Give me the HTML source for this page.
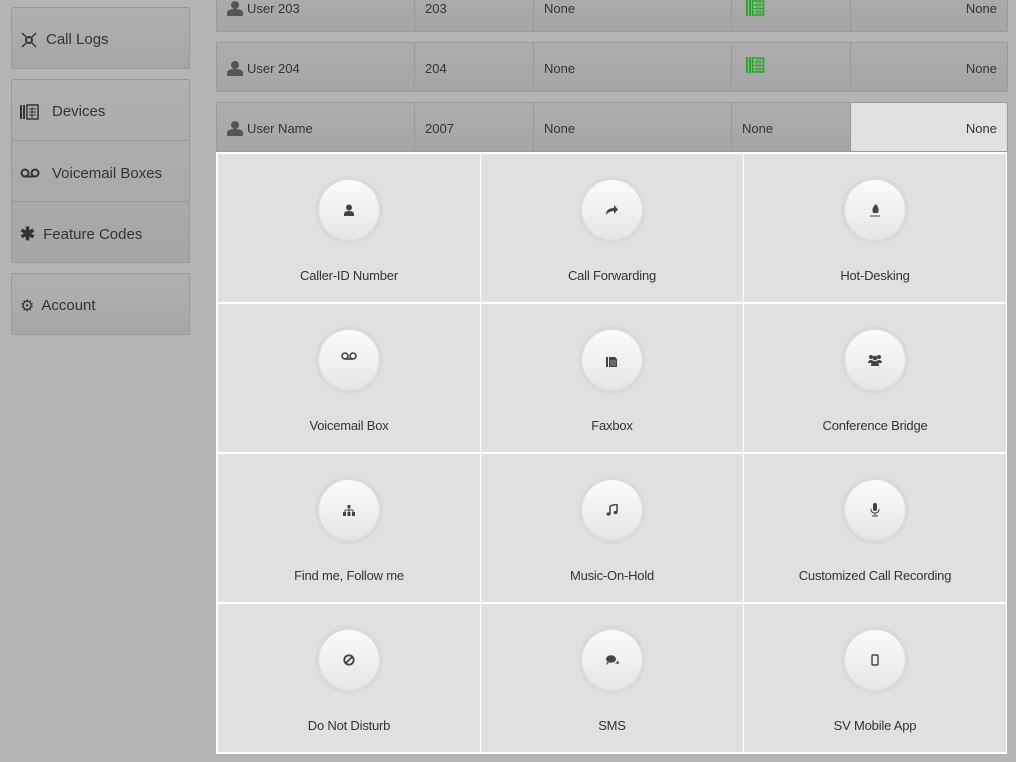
<!DOCTYPE html>
<html><head><meta charset="utf-8"><style>
*{box-sizing:border-box;margin:0;padding:0}
body{width:1016px;height:762px;background:#b4b4b4;font-family:"Liberation Sans",sans-serif;color:#333;position:relative;overflow:hidden}
.sb{position:absolute;left:11px;width:179px;border:1px solid #999;border-radius:2px;background:linear-gradient(#b0b0b0,#a6a6a6)}
.sbi{position:absolute;left:11px;width:179px;height:61px;font-size:15px;color:#333;display:flex;align-items:center;padding-left:9px;padding-top:4px;border-top:1px solid #999}
.sbi svg{margin-right:8px}
.row{position:absolute;left:216px;width:792px;height:50px;border:1px solid #999;border-radius:2px;background:linear-gradient(#adadad,#a5a5a5);font-size:13px}
.c{position:absolute;top:0;height:100%;border-left:1px solid #999;display:flex;align-items:center;padding-left:10px;padding-top:2px}
.grid{position:absolute;left:216px;top:152px;width:792px;height:602px;background:#fff}
.t{position:absolute;width:262px;height:148px;background:#e0e0e0}
.t .h{position:absolute;left:97px;top:22px;width:68px;height:68px;border-radius:50%;background:#dadada}
.t .b{position:absolute;left:101px;top:26px;width:60px;height:60px;border-radius:50%;background:linear-gradient(#fbfbfb,#e5e5e5);display:flex;align-items:center;justify-content:center}
.t .l{position:absolute;left:0;right:0;top:114px;text-align:center;font-size:13px;color:#333;letter-spacing:-0.2px}
</style></head><body>
<div class="sb" style="top:7px;height:62px"></div>
<div class="sbi" style="top:7px;border:none"><svg width="18" height="16" viewBox="0 0 18 16"><circle cx="9" cy="8" r="3" fill="none" stroke="#333" stroke-width="2"/><g stroke="#333" stroke-width="1.5"><line x1="2" y1="1" x2="6" y2="5"/><line x1="16" y1="1" x2="12" y2="5"/><line x1="2" y1="15" x2="6" y2="11"/><line x1="16" y1="15" x2="12" y2="11"/></g></svg>Call Logs</div>
<div class="sb" style="top:79px;height:184px"></div>
<div class="sbi" style="top:79px;border:none"><svg width="20" height="16" viewBox="0 0 20 16"><rect x="0" y="1" width="2" height="14" fill="#333"/><rect x="3" y="1" width="2" height="14" fill="#333"/><rect x="7" y="1" width="11" height="14" fill="none" stroke="#333" stroke-width="1.5"/><path d="M9 5h7M9 8h7M9 11h7M12 3v11" stroke="#333"/></svg><span style="margin-left:4px">Devices</span></div>
<div class="sbi" style="top:140px"><svg width="20" height="10" viewBox="0 0 20 10"><circle cx="5" cy="5" r="3.5" fill="none" stroke="#333" stroke-width="2"/><circle cx="15" cy="5" r="3.5" fill="none" stroke="#333" stroke-width="2"/><line x1="5" y1="8.5" x2="15" y2="8.5" stroke="#333" stroke-width="2"/></svg><span style="margin-left:4px">Voicemail Boxes</span></div>
<div class="sbi" style="top:201px"><span style="font-size:18px;font-weight:bold;margin-right:8px">✱</span>Feature Codes</div>
<div class="sb" style="top:273px;height:62px"></div>
<div class="sbi" style="top:273px;border:none"><span style="font-size:16px;margin-right:7px">⚙</span>Account</div>

<div class="row" style="top:-18px"><div class="c" style="left:0;border:none;padding-left:10px"><svg width="16" height="15" viewBox="0 0 16 15"><circle cx="8" cy="4" r="4" fill="#555"/><path d="M0 15v-3q0-4 8-4t8 4v3z" fill="#555"/></svg><span style="margin-left:4px">User 203</span></div><div class="c" style="left:197px;width:119px">203</div><div class="c" style="left:316px;width:198px">None</div><div class="c" style="left:514px;width:119px;padding-left:14px"><svg width="19" height="16"><rect x="0" y="0" width="2" height="16" fill="#2a2"/><rect x="3" y="0" width="2" height="16" fill="#2a2"/><rect x="6.5" y="1" width="11" height="14" fill="none" stroke="#2a2" stroke-width="1.5"/><path d="M7 5h10M7 8.5h10M7 12h10M11 1v14M14 1v14" stroke="#2a2"/></svg></div><div class="c" style="left:633px;width:157px;justify-content:flex-end;padding-right:10px">None</div></div>
<div class="row" style="top:42px"><div class="c" style="left:0;border:none;padding-left:10px"><svg width="16" height="15" viewBox="0 0 16 15"><circle cx="8" cy="4" r="4" fill="#555"/><path d="M0 15v-3q0-4 8-4t8 4v3z" fill="#555"/></svg><span style="margin-left:4px">User 204</span></div><div class="c" style="left:197px;width:119px">204</div><div class="c" style="left:316px;width:198px">None</div><div class="c" style="left:514px;width:119px;padding-left:14px;padding-bottom:6px"><svg width="19" height="16"><rect x="0" y="0" width="2" height="16" fill="#2a2"/><rect x="3" y="0" width="2" height="16" fill="#2a2"/><rect x="6.5" y="1" width="11" height="14" fill="none" stroke="#2a2" stroke-width="1.5"/><path d="M7 5h10M7 8.5h10M7 12h10M11 1v14M14 1v14" stroke="#2a2"/></svg></div><div class="c" style="left:633px;width:157px;justify-content:flex-end;padding-right:10px">None</div></div>
<div class="row" style="top:102px"><div class="c" style="left:0;border:none;padding-left:10px"><svg width="16" height="15" viewBox="0 0 16 15"><circle cx="8" cy="4" r="4" fill="#555"/><path d="M0 15v-3q0-4 8-4t8 4v3z" fill="#555"/></svg><span style="margin-left:4px">User Name</span></div><div class="c" style="left:197px;width:119px">2007</div><div class="c" style="left:316px;width:198px">None</div><div class="c" style="left:514px;width:119px">None</div><div class="c" style="left:633px;width:157px;justify-content:flex-end;padding-right:10px;background:#e0e0e0">None</div></div>

<div class="grid" style="width:791px">
<div class="t" style="left:2px;top:2px"><div class="h"></div><div class="b"><svg width="12" height="12"><circle cx="6" cy="3.5" r="3" fill="#444"/><path d="M1 12v-2q0-3 5-3t5 3v2z" fill="#444"/></svg></div><div class="l">Caller-ID Number</div></div>
<div class="t" style="left:265px;top:2px"><div class="h"></div><div class="b"><svg width="14" height="12"><path d="M1 11q0-7 8-7v-3l4 4.5-4 4.5v-3q-5 0-8 4z" fill="#444"/></svg></div><div class="l">Call Forwarding</div></div>
<div class="t" style="left:528px;top:2px"><div class="h"></div><div class="b"><svg width="12" height="14"><path d="M7 1q-5 4-3 9h5q2-4-2-9z" fill="#444"/><line x1="1" y1="13" x2="11" y2="13" stroke="#444"/></svg></div><div class="l">Hot-Desking</div></div>
<div class="t" style="left:2px;top:152px"><div class="h"></div><div class="b" style="padding-bottom:8px"><svg width="16" height="8"><circle cx="4" cy="4" r="3" fill="none" stroke="#444" stroke-width="1.6"/><circle cx="12" cy="4" r="3" fill="none" stroke="#444" stroke-width="1.6"/><line x1="4" y1="7" x2="12" y2="7" stroke="#444" stroke-width="1.6"/></svg></div><div class="l">Voicemail Box</div></div>
<div class="t" style="left:265px;top:152px"><div class="h"></div><div class="b"><svg width="12" height="13"><rect x="0" y="3" width="2" height="10" fill="#444"/><path d="M3 3h6l2 2v8h-8z" fill="#444"/><path d="M4 7h6M4 9h6M4 11h6" stroke="#ddd" stroke-width=".6"/></svg></div><div class="l">Faxbox</div></div>
<div class="t" style="left:528px;top:152px"><div class="h"></div><div class="b"><svg width="14" height="12"><circle cx="3" cy="3" r="2" fill="#444"/><circle cx="11" cy="3" r="2" fill="#444"/><circle cx="7" cy="4" r="2.3" fill="#444"/><path d="M0 9q0-3 3-3t3 3zM8 9q0-3 3-3t3 3zM3 12q0-5 4-5t4 5z" fill="#444"/></svg></div><div class="l">Conference Bridge</div></div>
<div class="t" style="left:2px;top:302px"><div class="h"></div><div class="b"><svg width="12" height="11"><rect x="4.5" y="0" width="3" height="3" fill="#444"/><path d="M6 3v2M2 5h8M2 5v2M10 5v2M6 5v2" stroke="#444"/><rect x="0" y="7" width="3" height="4" fill="#444"/><rect x="4.5" y="7" width="3" height="4" fill="#444"/><rect x="9" y="7" width="3" height="4" fill="#444"/></svg></div><div class="l">Find me, Follow me</div></div>
<div class="t" style="left:265px;top:302px"><div class="h"></div><div class="b"><svg width="12" height="12"><path d="M4 2l7-2v8" stroke="#444" stroke-width="1.5" fill="none"/><path d="M4 2v8" stroke="#444" stroke-width="1.5"/><ellipse cx="2.5" cy="10" rx="2" ry="1.6" fill="#444"/><ellipse cx="9.5" cy="8.5" rx="2" ry="1.6" fill="#444"/></svg></div><div class="l">Music-On-Hold</div></div>
<div class="t" style="left:528px;top:302px"><div class="h"></div><div class="b"><svg width="10" height="14"><rect x="3" y="0" width="4" height="8" rx="2" fill="#444"/><path d="M1 6q0 4 4 4t4-4M5 10v3M2 13h6" stroke="#444" fill="none"/></svg></div><div class="l">Customized Call Recording</div></div>
<div class="t" style="left:2px;top:452px"><div class="h"></div><div class="b"><svg width="12" height="12"><circle cx="6" cy="6" r="4.7" fill="none" stroke="#444" stroke-width="1.8"/><line x1="3" y1="9" x2="9" y2="3" stroke="#444" stroke-width="1.8"/></svg></div><div class="l">Do Not Disturb</div></div>
<div class="t" style="left:265px;top:452px"><div class="h"></div><div class="b"><svg width="14" height="12"><ellipse cx="6" cy="5" rx="5" ry="3.8" fill="#444"/><path d="M2 8l-1 3 3-2z" fill="#444"/><path d="M9 9q3 0 4-3l1 4z" fill="#444"/></svg></div><div class="l">SMS</div></div>
<div class="t" style="left:528px;top:452px"><div class="h"></div><div class="b"><svg width="8" height="12"><rect x="1" y="1" width="6" height="10" rx="1" fill="none" stroke="#444" stroke-width="1.4"/></svg></div><div class="l">SV Mobile App</div></div>
</div>
</body></html>
